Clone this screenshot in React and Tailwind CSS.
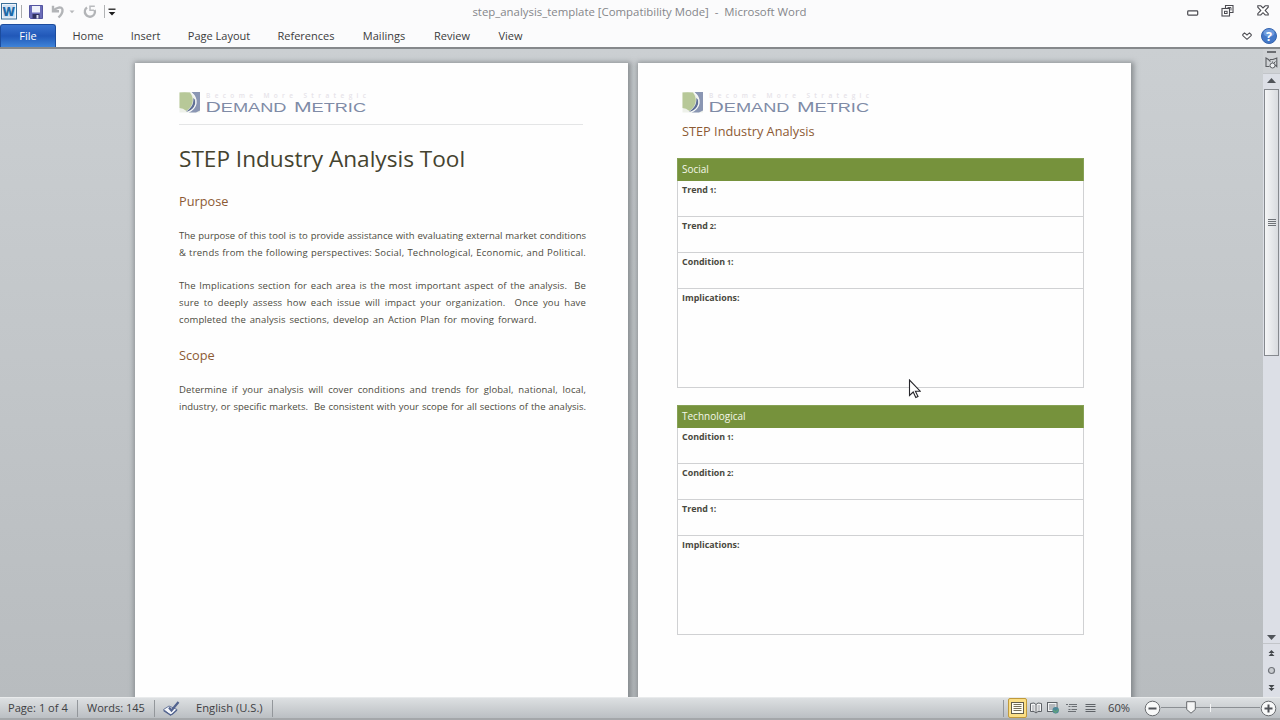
import React from 'react';

const TABS = [
  { label: 'Home', width: 'w-[58px]' },
  { label: 'Insert', width: 'w-[57px]' },
  { label: 'Page Layout', width: 'w-[90px]' },
  { label: 'References', width: 'w-[84px]' },
  { label: 'Mailings', width: 'w-[72px]' },
  { label: 'Review', width: 'w-[64px]' },
  { label: 'View', width: 'w-[53px]' },
];

const SOCIAL_ROWS = [
  { label: 'Trend', number: '1' },
  { label: 'Trend', number: '2' },
  { label: 'Condition', number: '1' },
  { label: 'Implications' },
];

const TECH_ROWS = [
  { label: 'Condition', number: '1' },
  { label: 'Condition', number: '2' },
  { label: 'Trend', number: '1' },
  { label: 'Implications' },
];

function WordIcon() {
  return (
    <svg width="17" height="17" viewBox="0 0 17 17">
      <rect x="1.5" y="0.5" width="15" height="15.5" fill="#eef4fb" stroke="#3b7099" />
      <rect x="3" y="2" width="12" height="12.5" fill="#cfe0f2" />
      <text x="8.8" y="13" textAnchor="middle" fontFamily="Open Sans, sans-serif" fontWeight="800" fontSize="12" fill="#1d6aa8">W</text>
    </svg>
  );
}

function SaveIcon() {
  return (
    <svg width="14" height="14" viewBox="0 0 14 14">
      <path d="M0.5 0.5h13v13h-12l-1-1z" fill="#6a6cb8" stroke="#5355a0" />
      <rect x="3" y="1" width="8" height="6.5" fill="#eef1fa" />
      <rect x="3.5" y="9" width="7" height="4.5" fill="#30325f" />
      <rect x="7.5" y="10" width="2" height="3.5" fill="#dfe2f2" />
    </svg>
  );
}

function QuickAccess() {
  return (
    <div className="flex h-[23px] w-[124px] shrink-0 items-center">
      <WordIcon />
      <span className="ml-[4px] h-[13px] w-px bg-[#a9abad]" />
      <span className="ml-[7px]"><SaveIcon /></span>
      <svg className="ml-[8px]" width="26" height="14" viewBox="0 0 26 14">
        <path d="M2 0.8v5.4h6M2.5 5.8C5 2.5 11 0.8 11.5 4.8c0.3 3-1.7 5.5-4 7.7" fill="none" stroke="#b2b4b7" strokeWidth="2.4" />
        <path d="M18.5 5.5h5l-2.5 2.8z" fill="#b7b9bb" />
      </svg>
      <svg className="ml-[6px]" width="14" height="14" viewBox="0 0 14 14">
        <path d="M4 2.6A5 5 0 1 0 11.6 5" fill="none" stroke="#b2b4b7" strokeWidth="2.4" />
        <path d="M6.2 1.2h5.6M7 0.6v4.6h4" fill="none" stroke="#b9bbbe" strokeWidth="1.5" />
      </svg>
      <span className="ml-[7px] h-[13px] w-px bg-[#b1b3b5]" />
      <svg className="ml-[3px]" width="8" height="8" viewBox="0 0 8 8">
        <path d="M0.5 1.2h7" stroke="#1d1d1d" strokeWidth="1.3" />
        <path d="M0.7 4h6.6l-3.3 3.5z" fill="#1d1d1d" />
      </svg>
    </div>
  );
}

function WindowButtons() {
  return (
    <div className="flex h-[23px] w-[120px] shrink-0 items-center pl-[27px] text-[#4a4a50]">
      <svg width="12" height="6" viewBox="0 0 12 6" className="mt-[2px]">
        <rect x="0.7" y="0.9" width="10" height="4.2" rx="0.8" fill="#fff" stroke="currentColor" strokeWidth="1.2" />
      </svg>
      <svg width="13" height="12" viewBox="0 0 13 12" className="ml-[22px] -mt-[2px]">
        <path d="M4.5 3.5v-3h7.5v7h-3.5" fill="#fff" stroke="currentColor" strokeWidth="1.1" />
        <rect x="1" y="3.5" width="7.5" height="7.5" fill="#fff" stroke="currentColor" strokeWidth="1.1" />
        <rect x="3.5" y="6.3" width="2.6" height="2.2" fill="#fff" stroke="currentColor" />
        <path d="M6.5 2.5h3.5v3" fill="none" stroke="currentColor" strokeWidth="0.9" />
      </svg>
      <svg width="12" height="11" viewBox="0 0 12 11" className="ml-[23px] -mt-[2px]">
        <path d="M0.8 0.8h3L6 3l2.200-2.200h3v1.400L8.200 5.400l3 3.200V10h-3L6 7.700 3.800 10h-3V8.600l3-3.200-3-3.200z" fill="#fff" stroke="currentColor" strokeWidth="1.1" />
      </svg>
    </div>
  );
}

function TitleBar() {
  return (
    <div className="flex h-[24px] justify-between">
      <QuickAccess />
      <div className="mr-[5px] h-6 whitespace-pre text-[11.4px] leading-[23px] text-[#85868a]">
        step_analysis_template [Compatibility Mode]&nbsp; -&nbsp; Microsoft Word
      </div>
      <WindowButtons />
    </div>
  );
}

function Ribbon() {
  return (
    <div className="flex h-[23px] text-[11px] text-[#3b3b3d]">
      <div className="flex h-[23px] w-[56px] items-center justify-center rounded-t-[3px] border border-b-0 border-[#1c4c9d] bg-linear-to-b from-[#3a73cf] via-[#2158b8] to-[#3f83d8] text-white">
        File
      </div>
      <div className="flex h-6 items-center pl-[3px]">
        {TABS.map((tab) => (
          <span key={tab.label} className={`${tab.width} text-center whitespace-nowrap`}>{tab.label}</span>
        ))}
      </div>
      <div className="ml-auto flex h-[23px] items-center pr-[3px]">
        <svg width="10" height="8" viewBox="0 0 10 8" className="mr-[9px]">
          <path d="M0.8 2.5L2.5 0.9 5 3 7.5 0.9 9.2 2.5V3.600L5 7.3 0.8 3.600z" fill="#fff" stroke="#4f4f55" strokeWidth="1.1" />
        </svg>
        <svg width="16" height="16" viewBox="0 0 16 16">
          <circle cx="8" cy="8" r="7.5" fill="#4478c8" stroke="#3664ad" />
          <ellipse cx="8" cy="5" rx="5.5" ry="3.8" fill="#6e9bdd" />
          <text x="8" y="12.5" textAnchor="middle" fontFamily="Open Sans, sans-serif" fontWeight="700" fontSize="12.5" fill="#fff">?</text>
        </svg>
      </div>
    </div>
  );
}

function Logo() {
  return (
    <svg width="190" height="24" viewBox="0 0 190 24" className="block">
      <rect x="0.5" y="2" width="20.5" height="20.5" fill="#eef1ea" />
      <path d="M0.5 2.500Q5 2 11 2.500C16 9 14 16 7.5 21Q4 18 0.5 18z" fill="#b7c898" />
      <path d="M12.5 2H21v18.5L17 22.5H9.5C18.5 18 19 9 12.5 2z" fill="#8a96b3" />
      <path d="M14.3 8C15 14 12 18.5 7 21.8 14 21 17.5 15 15.8 9.5z" fill="#5f6f96" />
      <path d="M12 2.5C20 9 18.5 18 9 22.5" fill="none" stroke="#f6f8f8" strokeWidth="1.2" />
      <text x="27" y="8" textLength="160" fontFamily="Open Sans, sans-serif" fontSize="6.5" fontWeight="600" fill="#e6e3e9">Become More Strategic</text>
      <g fontFamily="Liberation Sans, sans-serif" fill="#7f8ba6">
        <text x="26.5" y="22" textLength="81" lengthAdjust="spacingAndGlyphs" fontSize="14">D<tspan fontSize="12">EMAND</tspan></text>
        <text x="115" y="22" textLength="72" lengthAdjust="spacingAndGlyphs" fontSize="14">M<tspan fontSize="12">ETRIC</tspan></text>
      </g>
    </svg>
  );
}

function Heading({ children }) {
  return <h2 className="text-[12.75px] leading-[18px] text-[#8c5a34]">{children}</h2>;
}

// One justified line of body text
function Line({ children, className = '[text-align-last:justify]' }) {
  return <div className={`h-[17px] whitespace-nowrap ${className}`}>{children}</div>;
}

function Body({ children }) {
  return <div className="w-[407px] text-[9.5px] leading-[17px] text-[#4c4b40]">{children}</div>;
}

function CoverPage() {
  return (
    <div className="h-[660px] w-[493px] shrink-0 bg-[#fefefe] pl-[44px] pt-[27px] shadow-[1px_1px_5px_2px_rgba(105,109,112,0.65)]">
      <Logo />
      <div className="mt-[10px] h-px w-[404px] bg-[#e4e5e6]" />
      <h1 className="mt-[18px] text-[22.6px] leading-[32px] whitespace-nowrap text-[#45432f]">STEP Industry Analysis Tool</h1>
      <div className="mt-[17px]"><Heading>Purpose</Heading></div>
      <div className="mt-[17px] flex flex-col gap-[16px]">
        <Body>
          <Line>The purpose of this tool is to provide assistance with evaluating external market conditions</Line>
          <Line className="tracking-[0.22px] [text-align-last:justify]">&amp; trends from the following perspectives: Social, Technological, Economic, and Political.</Line>
        </Body>
        <Body>
          <Line className="tracking-[0.1px] [text-align-last:justify]">The Implications section for each area is the most important aspect of the analysis.&nbsp; Be</Line>
          <Line className="tracking-[0.15px] [text-align-last:justify]">sure to deeply assess how each issue will impact your organization.&nbsp; Once you have</Line>
          <Line className="tracking-[0.12px] [word-spacing:1.2px]">completed the analysis sections, develop an Action Plan for moving forward.</Line>
        </Body>
      </div>
      <div className="mt-[18px]"><Heading>Scope</Heading></div>
      <div className="mt-[17px]">
        <Body>
          <Line className="tracking-[0.1px] [text-align-last:justify]">Determine if your analysis will cover conditions and trends for global, national, local,</Line>
          <Line>industry, or specific markets.&nbsp; Be consistent with your scope for all sections of the analysis.</Line>
        </Body>
      </div>
    </div>
  );
}

function AnalysisTable({ title, rows }) {
  return (
    <div className="w-[407px] border border-[#d0d1d3]">
      <div className="-mx-px -mt-px h-[23px] border border-b-0 border-[#86a155] bg-[#76923c] pl-[4px] text-[10px] leading-[21px] text-[#f4f7ea]">{title}</div>
      {rows.map((row, i) => (
        <div
          key={i}
          className={`pl-[4px] text-[8.9px] leading-[18px] font-bold text-[#4a4940] ${i === rows.length - 1 ? 'h-[98px]' : 'h-[36px] border-b border-[#d0d1d3]'}`}
        >
          {row.label}
          {row.number && <span className="text-[7px]">{' '}{row.number}</span>}:
        </div>
      ))}
    </div>
  );
}

function AnalysisPage() {
  return (
    <div className="h-[660px] w-[493px] shrink-0 bg-[#fefefe] pl-[39px] pt-[27px] shadow-[1px_1px_5px_2px_rgba(105,109,112,0.65)]">
      <div className="pl-[5px]">
        <Logo />
        <div className="mt-[8px]"><Heading>STEP Industry Analysis</Heading></div>
      </div>
      <div className="mt-[18px] flex flex-col gap-[17px]">
        <AnalysisTable title="Social" rows={SOCIAL_ROWS} />
        <AnalysisTable title="Technological" rows={TECH_ROWS} />
      </div>
    </div>
  );
}

function ScrollBar() {
  return (
    <div className="flex h-full w-[17px] shrink-0 flex-col items-center bg-[#dcdfe6]">
      <div className="flex w-full flex-col items-center bg-[#cfd2d5]">
        <div className="mt-[2px] h-[2px] w-[9px] bg-[#6b6e72]" />
        <svg className="mt-[4px] mb-[4px]" width="13" height="12" viewBox="0 0 13 12">
          <path d="M3.5 2.5L1 1v8.5h3.5M3.5 2.5L5.5 4.5M5 2.5h3L11.8 1v8.5L10 8" fill="none" stroke="#5b5e62" strokeWidth="1.1" />
          <circle cx="7.5" cy="8.5" r="2.5" fill="#eef0f2" stroke="#5b5e62" />
          <path d="M7.5 4.5v1M9 6l1.5-1.5" stroke="#5b5e62" />
        </svg>
      </div>
      <div className="h-px w-full bg-[#c2c5c9]" />
      <svg className="mt-[4px]" width="9" height="5" viewBox="0 0 9 5"><path d="M4.5 0L9 5H0z" fill="#505459" /></svg>
      <div className="mt-[6px] flex h-[267px] w-[15px] flex-col items-center justify-center gap-[1px] border border-[#85898e] bg-linear-to-r from-[#f5f6f7] to-[#d8dbdf]">
        <span className="h-px w-[8px] bg-[#6f7378]" />
        <span className="h-px w-[8px] bg-[#6f7378]" />
        <span className="h-px w-[8px] bg-[#6f7378]" />
        <span className="h-px w-[8px] bg-[#6f7378]" />
      </div>
      <div className="flex-1" />
      <svg width="9" height="5" viewBox="0 0 9 5"><path d="M4.5 5L9 0H0z" fill="#505459" /></svg>
      <div className="mt-[3px] h-px w-full bg-[#c2c5c9]" />
      <svg className="mt-[6px]" width="7" height="6" viewBox="0 0 7 6"><path d="M3.5 0L6.5 3H0.5zM3.5 3L6.5 6H0.5z" fill="#44484c" /></svg>
      <svg className="mt-[10px]" width="9" height="9" viewBox="0 0 9 9"><circle cx="4.5" cy="4.5" r="3" fill="#c9ccd0" stroke="#70747a" strokeWidth="1.2" /></svg>
      <svg className="mt-[10px] mb-[6px]" width="7" height="6" viewBox="0 0 7 6"><path d="M3.5 3L6.5 0H0.5zM3.5 6L6.5 3H0.5z" fill="#44484c" /></svg>
    </div>
  );
}

function Cursor() {
  return (
    <svg className="absolute left-[908px] top-[330px]" width="13" height="20" viewBox="0 0 13 20">
      <path d="M1.5 1v15.5l3.7-3.5 2.6 5.6 2.200-1-2.600-5.400h4.800z" fill="#fff" stroke="#26262b" strokeWidth="1.1" />
    </svg>
  );
}

function Divider() {
  return <span className="h-[17px] w-px bg-[#93979b]" />;
}

function ZoomButton({ plus }) {
  return (
    <svg width="17" height="17" viewBox="0 0 17 17">
      <circle cx="8.5" cy="8.5" r="7.3" fill="#f8f9f9" stroke="#686b6f" />
      <path d={plus ? 'M4.5 8.5h8M8.5 4.5v8' : 'M4.5 8.5h8'} stroke="#505358" strokeWidth="2" />
    </svg>
  );
}

function ViewButtons() {
  return (
    <div className="flex items-center">
      <span className="ml-[4px] flex h-[20px] w-[19px] items-center justify-center rounded-[2px] border border-[#c09a3c] bg-[#fbdf86]">
        <svg width="13" height="12" viewBox="0 0 13 12">
          <rect x="0.5" y="0.5" width="12" height="11" fill="#fffdf2" stroke="#625c48" />
          <path d="M2.5 2.5h8M2.5 4.5h8M2.5 6.5h8M2.5 8.5h8" stroke="#77705a" />
        </svg>
      </span>
      <svg className="ml-[3px]" width="12" height="12" viewBox="0 0 12 12">
        <path d="M0.5 1.5L4 1 6 2.5 8 1l3.5 0.5v8H8L6 11 4 9.5H0.5zM6 2.5V11" fill="#f5f6f7" stroke="#5e6267" />
        <path d="M2 4h2.5M2 6h2.5M2 8h2.5M7.5 4H10M7.5 6H10M7.5 8H10" stroke="#84888d" strokeWidth="0.8" />
      </svg>
      <svg className="ml-[5px]" width="13" height="12" viewBox="0 0 13 12">
        <rect x="0.5" y="0.5" width="9.5" height="9" fill="#f3f5f6" stroke="#5e6267" />
        <path d="M2 3h6.5M2 5h6.5M2 7h4" stroke="#7a7f85" />
        <circle cx="8.7" cy="8.3" r="3.2" fill="#4d8799" />
        <path d="M6.5 8l2 2.5 3-3" fill="none" stroke="#5fa07c" strokeWidth="1.5" />
      </svg>
      <svg className="ml-[6px]" width="12" height="10" viewBox="0 0 12 10">
        <path d="M0 1.5h2M3 1.5h8M2.5 3.5h2M5.5 3.5h5.5M2.5 6.5h2M5.5 6.5h5.5M2 8.5h8" stroke="#6b6f74" />
      </svg>
      <svg className="ml-[7px]" width="11" height="10" viewBox="0 0 11 10">
        <path d="M0.5 1.5h10M0.5 3.5h10M0.5 6.5h10M0.5 8.5h10" stroke="#5e6267" />
      </svg>
    </div>
  );
}

function StatusBar() {
  return (
    <div className="flex h-[23px] items-center border-t border-b-2 border-t-[#e9ebec] border-b-[#a4a7aa] bg-linear-to-b from-[#dde0e2] to-[#bbbfc3] text-[11px] text-[#3e4043]">
      <span className="w-[77px] pl-[8px] text-[11.1px] whitespace-nowrap">Page: 1 of 4</span>
      <Divider />
      <span className="w-[76px] pl-[9px] whitespace-nowrap">Words: 145</span>
      <Divider />
      <svg className="ml-[8px]" width="17" height="15" viewBox="0 0 17 15">
        <path d="M0.5 8.5L6 5l8 3.5-4.5 4.5-2 1z" fill="#f3f5fa" stroke="#68789c" />
        <path d="M0.5 9.5l7 4.5 2-1 4.5-4" fill="none" stroke="#51628e" strokeWidth="1.2" />
        <path d="M6 6.5l2.5 3L15.5 1" fill="none" stroke="#53648f" strokeWidth="2.2" />
      </svg>
      <span className="w-[92px] pl-[16px] text-[11.2px] whitespace-nowrap">English (U.S.)</span>
      <Divider />
      <div className="flex-1" />
      <Divider />
      <ViewButtons />
      <span className="ml-[12px] w-[36px] text-[11.2px]">60%</span>
      <ZoomButton />
      <div className="relative h-[14px] w-[99px]">
        <div className="mt-[6px] h-px w-full bg-[#8b8f93]" />
        <div className="absolute left-[49px] top-[3px] h-[8px] w-px bg-[#f3f4f5]" />
        <svg className="absolute left-[25px] top-0" width="10" height="13" viewBox="0 0 10 13">
          <path d="M0.7 0.7h8.6v7.8L5 12.2 0.7 8.5z" fill="#f5f6f6" stroke="#65686c" />
        </svg>
      </div>
      <ZoomButton plus />
      <span className="w-[3px]" />
    </div>
  );
}

export default function App() {
  return (
    <div className="flex h-[720px] w-[1280px] flex-col overflow-hidden bg-[#fbfbfc] font-['Open_Sans',sans-serif]">
      <TitleBar />
      <Ribbon />
      <div className="relative flex h-[650px] overflow-hidden border-t-2 border-[#85888b] bg-linear-to-b from-[#cbcfd2] to-[#b8bcbf]">
        <div className="flex flex-1 gap-[10px] overflow-hidden pl-[135px] pt-[14px]">
          <CoverPage />
          <AnalysisPage />
        </div>
        <ScrollBar />
        <Cursor />
      </div>
      <StatusBar />
    </div>
  );
}
